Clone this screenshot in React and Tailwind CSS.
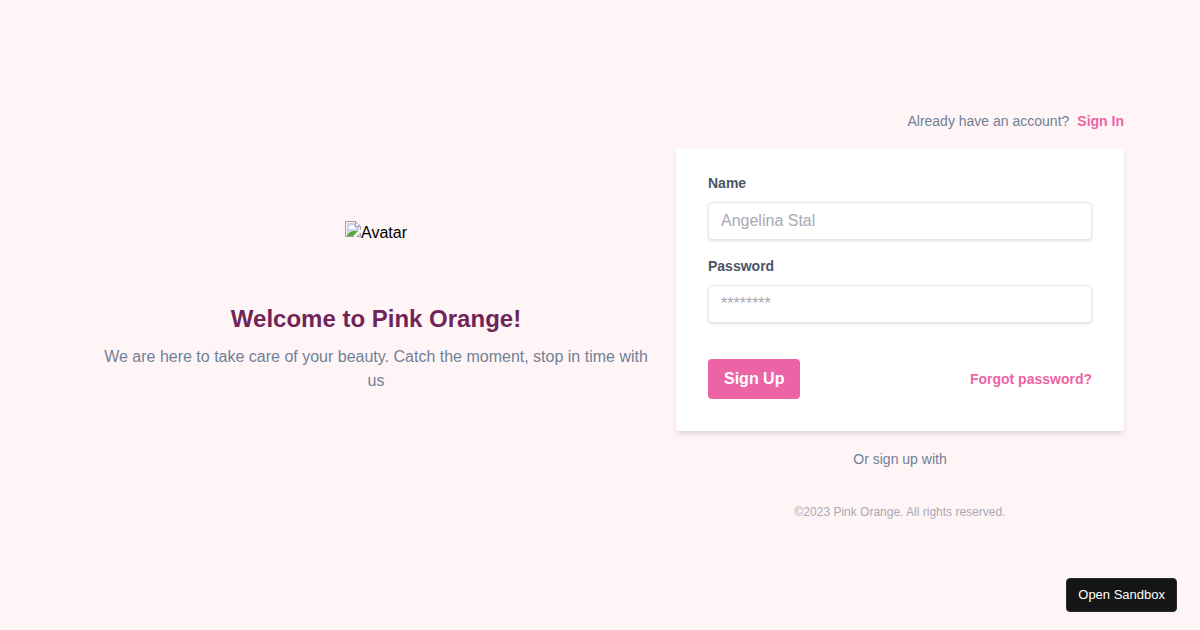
import React from "react";

const Field = ({ id, label, type, placeholder, className }) => (
  <div className={className}>
    <label htmlFor={id} className="block text-[#4a5568] text-sm leading-[21px] font-bold mb-2">
      {label}
    </label>
    <input
      id={id}
      type={type}
      placeholder={placeholder}
      className="appearance-none block w-full rounded border border-[#e2e8f0] bg-white shadow py-2 px-3 text-[#4a5568] leading-tight placeholder:text-[#a9a9b5] focus:outline-none"
    />
  </div>
);

const BrokenImage = () => (
  <svg width="16" height="16" viewBox="0 0 16 16" role="img" aria-label="Avatar">
    <path d="M0 0H11L16 5V9L9 16H0Z" fill="#f4f4f8" />
    <path d="M2 2H10V6H14V9.500L9 14H2Z" fill="#c9d3ea" />
    <path d="M4 8Q3 6 5 5.500Q5 4 7 4Q9 4 9 6Q11 6 11 8Z" fill="#fff" />
    <path d="M2 15V14Q6 10 9 10H13L8 15Z" fill="#55a63a" />
    <path d="M9 15.500H0.500V0.500H11M15.500 5V9" fill="none" stroke="#a0a0a8" />
    <path d="M10.500 0.500V5.500H15.500Z" fill="#fff" stroke="#a0a0a8" />
    <path d="M8.500 16L16 8.500V11L11 16Z" fill="#fff5f7" />
    <path d="M12 15.500H15.500V12Z" fill="#e4e4ec" stroke="#a0a0a8" />
  </svg>
);

export default function App() {
  return (
    <div className="min-h-screen bg-[#fff5f7] flex items-center justify-center font-['Liberation_Sans',sans-serif] text-black">
      <div className="w-full flex items-center px-[76px]">
        {/* Welcome */}
        <div className="flex-1 px-6 pb-4 text-center">
          <div className="flex justify-center mb-14">
            <BrokenImage />
            <span>Avatar</span>
          </div>
          <h1 className="text-2xl leading-9 font-bold text-[#702459] mb-2">Welcome to Pink Orange!</h1>
          <p className="text-[#718096]">
            We are here to take care of your beauty. Catch the moment, stop in time with us
          </p>
        </div>

        {/* Sign up */}
        <div className="w-full max-w-md">
          <p className="text-right text-sm leading-6 text-[#718096] mb-4">
            Already have an account?
            <a href="#signin" className="ml-2 font-bold text-[#ed64a6]">Sign In</a>
          </p>
          <form className="bg-white shadow-md rounded px-8 pt-6 pb-8 mb-4">
            <Field id="name" label="Name" type="text" placeholder="Angelina Stal" className="mb-4" />
            <Field id="password" label="Password" type="password" placeholder="********" className="mb-9" />
            <div className="flex items-center justify-between">
              <button type="button" className="bg-[#ed64a6] text-white font-bold py-2 px-4 rounded">
                Sign Up
              </button>
              <a href="#forgot" className="text-sm font-bold text-[#ed64a6]">Forgot password?</a>
            </div>
          </form>
          <p className="text-center text-sm leading-6 text-[#718096] mb-8">Or sign up with</p>
          <p className="text-center text-xs leading-[18px] text-[#a9a9b5]">©2023 Pink Orange. All rights reserved.</p>
        </div>
      </div>

      <button type="button" className="fixed right-[23px] bottom-[18px] bg-[#151515] text-white text-[13px] rounded px-[11px] h-[34px] border border-[#252830]">
        Open Sandbox
      </button>
    </div>
  );
}
